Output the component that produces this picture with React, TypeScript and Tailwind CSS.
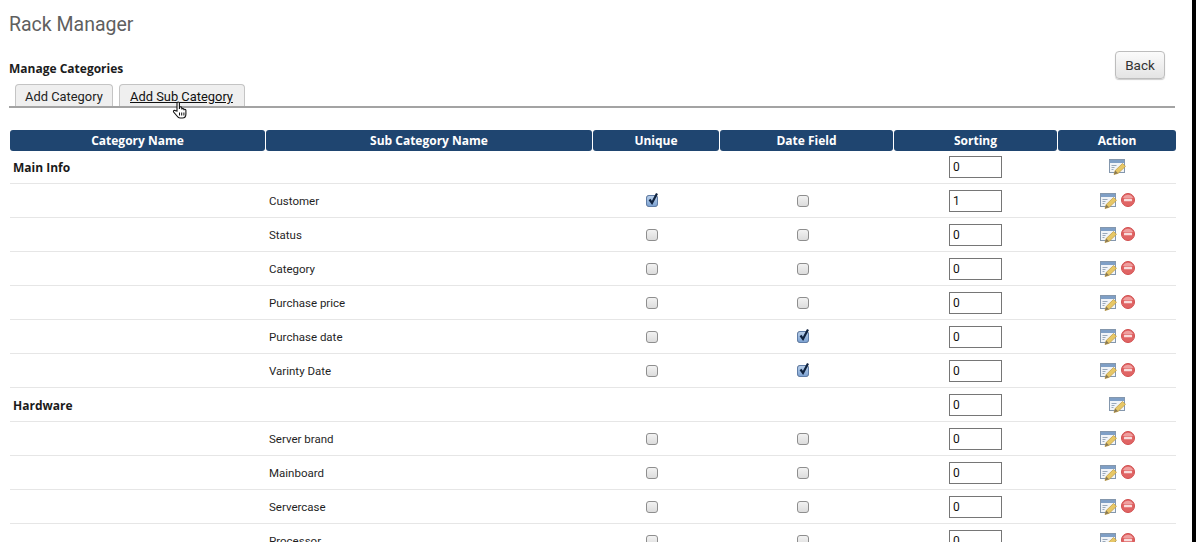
type Row = { cat?: string; sub?: string; unique?: boolean; date?: boolean; sort: string };

const rows: Row[] = [
  { cat: "Main Info", sort: "0" },
  { sub: "Customer", unique: true, sort: "1" },
  { sub: "Status", sort: "0" },
  { sub: "Category", sort: "0" },
  { sub: "Purchase price", sort: "0" },
  { sub: "Purchase date", date: true, sort: "0" },
  { sub: "Varinty Date", date: true, sort: "0" },
  { cat: "Hardware", sort: "0" },
  { sub: "Server brand", sort: "0" },
  { sub: "Mainboard", sort: "0" },
  { sub: "Servercase", sort: "0" },
  { sub: "Processor", sort: "0" },
];

const headers = ["Category Name", "Sub Category Name", "Unique", "Date Field", "Sorting", "Action"];

function EditIcon() {
  return (
    <svg width="17" height="16" viewBox="0 0 17 16" className="shrink-0">
      <rect x="0.5" y="0.5" width="15" height="13" fill="#f1f4f8" stroke="#8497ad" />
      <rect x="1" y="1" width="14" height="3" fill="#7f9fc6" />
      <path d="M2.5 6.5h5M2.5 8.5h3M2.5 10.5h2" stroke="#9aa9ba" />
      <path d="M5 15.5l1.2-4L13.5 4.5l3 2.8-7.3 7z" fill="#e7c766" stroke="#c09a3a" strokeWidth="0.7" />
      <path d="M5 15.5l1.2-4 2.9 2.8z" fill="#8a7a55" />
    </svg>
  );
}

function RemoveIcon() {
  return (
    <svg width="14" height="14" viewBox="0 0 14 14" className="shrink-0 -translate-y-px">
      <circle cx="7" cy="7" r="6.5" fill="#e06464" stroke="#d04f4f" />
      <path d="M2 5a5.5 5.5 0 0 1 10 0z" fill="#ef9f9f" />
      <rect x="3" y="5.8" width="8" height="2.4" rx="0.5" fill="#f8dcdc" />
    </svg>
  );
}

function Checkbox({ checked }: { checked?: boolean }) {
  return (
    <span className="relative block h-[12px] w-[12px] rounded-[3px] border border-[#8e8e8e] bg-gradient-to-b from-[#f2f2f2] to-[#dcdcdc]">
      {checked && (
        <>
          <span className="absolute inset-[-1px] rounded-[3px] border border-[#5f7da8] bg-gradient-to-b from-[#b9cfe9] to-[#7ea3d2]" />
          <svg width="12" height="14" viewBox="0 0 12 14" className="absolute left-[0px] top-[-4px]">
            <path d="M2.5 7.5l2.5 3.5L10 1.5" fill="none" stroke="#10233f" strokeWidth="2.2" />
          </svg>
        </>
      )}
    </span>
  );
}

function HandCursor() {
  return (
    <svg width="16" height="19" viewBox="0 0 16 19" className="absolute left-[172px] top-[101px]">
      <path
        d="M5 10V2.2a1.2 1.2 0 0 1 2.4 0V8l.2-1.2a1.1 1.1 0 0 1 2.2 0V8.4a1.1 1.1 0 0 1 2.1-.2v1a1 1 0 0 1 2 0v3.8c0 2.4-1.4 4-3.4 4H8c-1.4 0-2.2-.8-3-2L1.6 11c-.7-1.3.9-2.2 1.9-1.2z"
        fill="#fff"
        stroke="#111"
        strokeWidth="1.1"
      />
      <path d="M7.5 11.5v3M9.7 11.5v3M11.9 11.5v3" stroke="#111" />
    </svg>
  );
}

export default function App() {
  return (
    <div className="flex h-[542px] w-[1196px] overflow-hidden bg-black">
      <div className="relative h-[542px] w-[1192px] shrink-0 overflow-hidden bg-white font-['Roboto','Open_Sans',sans-serif] text-[11.5px] text-[#222]">
        <div className="pb-[-1px] pl-[9px] pt-[12px]">
          <h1 className="text-[19.5px] leading-[26px] text-[#5f5f5f]">Rack Manager</h1>
        </div>

        <div className="flex justify-between pl-[9px] pr-[27px] pt-[13px]">
          <div className="pt-[10px] font-['Open_Sans',sans-serif] text-[12px] font-bold leading-[16px] text-[#1c1c1c]">
            Manage Categories
          </div>
          <button className="h-[28px] w-[50px] rounded-[4px] border border-[#bdbdbd] bg-gradient-to-b from-[#fbfbfb] to-[#e4e4e4] pt-[1px] text-[13.5px] text-[#333] shadow-[0_1px_1px_rgba(0,0,0,0.2)]">
            Back
          </button>
        </div>

        <div className="ml-[9px] mr-[17px] mt-[5px] box-border flex h-[24px] gap-[6px] border-b-2 border-[#a3a3a3] pl-[6px]">
          <div className="h-[22px] w-[98px] rounded-t-[4px] border border-b-0 border-[#c4c4c4] bg-[#efefef] pl-[9px] text-[12.9px] leading-[24px]">
            Add Category
          </div>
          <div className="h-[22px] w-[126px] rounded-t-[4px] border border-b-0 border-[#c4c4c4] bg-[#efefef] pl-[10px] text-[12.9px] leading-[24px] text-[#111] underline">
            Add Sub Category
          </div>
        </div>

        <div className="ml-[10px] mt-[22px] w-[1166px]">
          <div className="grid h-[20px] grid-cols-[255px_326px_126px_173px_163px_118px] gap-x-[1px] font-['Open_Sans',sans-serif] text-[12px] font-bold leading-[21px] text-white">
            {headers.map((h) => (
              <div key={h} className="rounded-[3px] bg-[#1f4570] text-center">
                {h}
              </div>
            ))}
          </div>

          {rows.map((r, i) => (
            <div
              key={i}
              className="grid h-[34px] grid-cols-[255px_326px_126px_173px_163px_118px] items-center gap-x-[1px] border-b border-[#e6e6e6]"
            >
              <div className="pl-[3px] pt-[2px] font-['Open_Sans',sans-serif] text-[12px] font-bold text-[#1a1a1a]">
                {r.cat}
              </div>
              <div className="pl-[3px] pt-[2px] text-[#1f1f1f]">{r.sub}</div>
              <div className="flex justify-center pr-[8px]">{r.sub && <Checkbox checked={r.unique} />}</div>
              <div className="flex justify-center pr-[7px]">{r.sub && <Checkbox checked={r.date} />}</div>
              <div className="flex justify-center">
                <input
                  readOnly
                  value={r.sort}
                  className="h-[22px] w-[53px] border border-[#767676] bg-white pl-[3px] text-[12px] text-[#111] outline-none"
                />
              </div>
              <div className="flex items-center justify-center gap-[4px]">
                <EditIcon />
                {r.sub && <RemoveIcon />}
              </div>
            </div>
          ))}
        </div>

        <HandCursor />
      </div>
    </div>
  );
}
